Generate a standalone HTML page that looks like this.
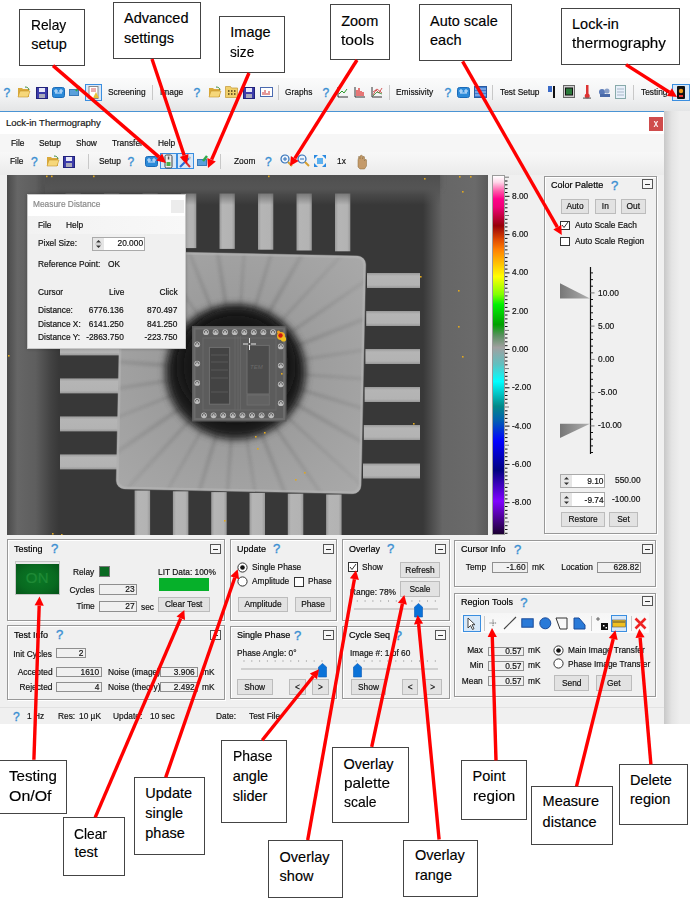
<!DOCTYPE html><html><head><meta charset="utf-8"><style>
*{margin:0;padding:0;box-sizing:border-box}
html,body{width:690px;height:900px;overflow:hidden;background:#fff;font-family:"Liberation Sans",sans-serif;color:#1a1a1a;position:relative}
.a{position:absolute}
.t{position:absolute;white-space:nowrap;-webkit-text-stroke:.2px currentColor}
.co{position:absolute;border:1.4px solid #444;background:#fff}
.grp{position:absolute;border:1px solid #989898;box-shadow:inset 1px 1px 0 #fff,1px 1px 0 #fff}
.min{position:absolute;width:11px;height:10px;border:1px solid #555;background:#f6f6f6}
.min:after{content:"";position:absolute;left:2px;right:2px;top:3.5px;height:1px;background:#333}
.q{position:absolute;font-size:13px;line-height:14px;color:#3a8fd2;-webkit-text-stroke:.35px #3a8fd2}
.tb{position:absolute;border:1px solid #8f8f8f;background:#f0f0f0}
.btn{position:absolute;border:1px solid #bcbcbc;background:#e2e2e2}
svg{position:absolute;overflow:visible}
</style></head><body>
<div class="a" style="left:0px;top:78px;width:690px;height:33px;background:linear-gradient(#fbfbfb,#f3f4f5 50%,#e4e5e6)"></div>
<div class="a" style="left:0px;top:111px;width:664px;height:1px;background:#4a94d4"></div>
<div class="a" style="left:664px;top:111px;width:26px;height:613px;background:linear-gradient(90deg,#c8c8c8,#e4e4e4 30%,#eeeeee 60%)"></div>
<div class="a" style="left:0px;top:112px;width:664px;height:612px;background:#f0f0f0"></div>
<div class="a" style="left:0px;top:112px;width:664px;height:22px;background:#fff"></div>
<div class="t" style="top:116.0px;font-size:9.5px;line-height:13px;color:#1a1a1a;left:6.0px;transform-origin:left;">Lock-in Thermography</div>
<div class="a" style="left:649px;top:117px;width:14px;height:14px;background:#cf4c4c"></div>
<div class="t" style="top:116.7px;font-size:10px;line-height:13px;color:#fff;left:649.0px;width:14px;text-align:center;transform-origin:center;transform:scaleX(0.88);">x</div>
<div class="a" style="left:0px;top:134px;width:664px;height:18px;background:#f6f6f6"></div>
<div class="t" style="top:136.0px;font-size:9.5px;line-height:13px;color:#111;left:11.0px;transform-origin:left;transform:scaleX(0.88);">File</div>
<div class="t" style="top:136.0px;font-size:9.5px;line-height:13px;color:#111;left:38.5px;transform-origin:left;transform:scaleX(0.88);">Setup</div>
<div class="t" style="top:136.0px;font-size:9.5px;line-height:13px;color:#111;left:75.5px;transform-origin:left;transform:scaleX(0.88);">Show</div>
<div class="t" style="top:136.0px;font-size:9.5px;line-height:13px;color:#111;left:111.5px;transform-origin:left;transform:scaleX(0.88);">Transfer</div>
<div class="t" style="top:136.0px;font-size:9.5px;line-height:13px;color:#111;left:157.5px;transform-origin:left;transform:scaleX(0.88);">Help</div>
<div class="a" style="left:0px;top:152px;width:664px;height:23px;background:linear-gradient(#f8f8f8,#ebebeb)"></div>
<div class="q" style="left:3.5px;top:85.5px;font-size:12px">?</div>
<svg style="left:17px;top:86px" width="14" height="12" viewBox="0 0 14 12"><path d="M1 2h4l1 1h6v8H1z" fill="#d9a93a"/><path d="M3 5h10l-2 6H1z" fill="#f6d77a" stroke="#c8962e" stroke-width=".6"/><path d="M8 1c2 0 4 1 4 3" stroke="#3a8a3a" fill="none" stroke-width="1"/></svg>
<svg style="left:35.5px;top:86.5px" width="12" height="12" viewBox="0 0 12 12"><rect x=".5" y=".5" width="11" height="11" fill="#3c3caa" stroke="#22227a"/><rect x="3" y="1" width="6" height="4" fill="#e8e8f8"/><rect x="3" y="7" width="6" height="4" fill="#aab"/></svg>
<svg style="left:52px;top:87px" width="13" height="11" viewBox="0 0 13 11"><rect x=".5" y=".5" width="12" height="10" rx="2" fill="#2c8ad8" stroke="#1a6ab8"/><path d="M3 3h2v2H3zM8 3h2v2H8zM3 6h7" stroke="#cfe6ff" fill="none" stroke-width="1"/></svg>
<svg style="left:69px;top:86px" width="12" height="11" viewBox="0 0 12 11"><rect x=".5" y="3.5" width="9" height="6" fill="#5aa0dc" stroke="#3a7ab8"/><path d="M7 5l3-4 2 2" stroke="#2fa84a" stroke-width="2" fill="none"/></svg>
<div class="a" style="left:85px;top:84px;width:16.5px;height:16.5px;border:1px solid #3a8ee0;background:#d8e8f8"></div>
<svg style="left:88px;top:86px" width="12" height="13" viewBox="0 0 12 13"><rect x="1" y=".5" width="9" height="12" fill="#fff" stroke="#888"/><path d="M3 3h5M3 5h5" stroke="#c33" stroke-width=".8"/><path d="M5 12l3-6 3 6z" fill="#e8c23a"/></svg>
<div class="t" style="top:85.0px;font-size:9.5px;line-height:13px;color:#111;left:107.8px;transform-origin:left;transform:scaleX(0.88);">Screening</div>
<div class="a" style="left:152px;top:85px;width:1px;height:15px;background:#c8c8c8"></div>
<div class="t" style="top:85.0px;font-size:9.5px;line-height:13px;color:#111;left:160.3px;transform-origin:left;transform:scaleX(0.88);">Image</div>
<div class="q" style="left:193.5px;top:85.5px;font-size:12px">?</div>
<svg style="left:208px;top:86px" width="14" height="12" viewBox="0 0 14 12"><path d="M1 2h4l1 1h6v8H1z" fill="#d9a93a"/><path d="M3 5h10l-2 6H1z" fill="#f6d77a" stroke="#c8962e" stroke-width=".6"/><path d="M8 1c2 0 4 1 4 3" stroke="#3a8a3a" fill="none" stroke-width="1"/></svg>
<svg style="left:225px;top:85px" width="13" height="13" viewBox="0 0 13 13"><path d="M.5 1.5h5l1 1.5h6v9.5H.5z" fill="#f0cf6a" stroke="#c8a040" stroke-width=".8"/><path d="M3 6h1.5M6 6h1.5M9 6h1.5M3 9h1.5M6 9h1.5M9 9h1.5" stroke="#4a3a10" stroke-width="1.6"/></svg>
<svg style="left:242.5px;top:86.5px" width="12" height="12" viewBox="0 0 12 12"><rect x=".5" y=".5" width="11" height="11" fill="#3c3caa" stroke="#22227a"/><rect x="3" y="1" width="6" height="4" fill="#e8e8f8"/><rect x="3" y="7" width="6" height="4" fill="#aab"/></svg>
<svg style="left:260px;top:87px" width="13" height="10" viewBox="0 0 13 10"><rect x=".5" y=".5" width="12" height="9" fill="#fff" stroke="#4a6ab0"/><path d="M3 8V5M5 8V3M7 8V6M9 8V4" stroke="#c33" stroke-width="1"/></svg>
<div class="a" style="left:277.5px;top:85px;width:1.0px;height:15px;background:#c8c8c8"></div>
<div class="t" style="top:85.0px;font-size:9.5px;line-height:13px;color:#111;left:285.4px;transform-origin:left;transform:scaleX(0.88);">Graphs</div>
<div class="q" style="left:322.5px;top:85.5px;font-size:12px">?</div>
<svg style="left:337px;top:86px" width="11" height="12" viewBox="0 0 11 12"><path d="M1 1v10h10" stroke="#333" fill="none"/><path d="M2 8l3-3 2 2 3-4" stroke="#2a9a2a" fill="none"/></svg>
<svg style="left:354px;top:86px" width="11" height="12" viewBox="0 0 11 12"><path d="M1 1v10h10" stroke="#333" fill="none"/><path d="M3 10V4M5 10V2M7 10V5M9 10V6" stroke="#d22" stroke-width="1.2"/></svg>
<svg style="left:371px;top:86px" width="12" height="12" viewBox="0 0 12 12"><path d="M1 1v10h10" stroke="#333" fill="none"/><path d="M2 9l3-5 3 3 3-5M2 6l4-3 5 4" stroke="#c33" fill="none" stroke-width=".8"/><path d="M2 10l4-4 5 2" stroke="#2a8a2a" fill="none" stroke-width=".8"/></svg>
<div class="a" style="left:388.5px;top:85px;width:1.0px;height:15px;background:#c8c8c8"></div>
<div class="t" style="top:85.0px;font-size:9.5px;line-height:13px;color:#111;left:395.7px;transform-origin:left;transform:scaleX(0.88);">Emissivity</div>
<div class="q" style="left:444.5px;top:85.5px;font-size:12px">?</div>
<svg style="left:457px;top:87px" width="13" height="11" viewBox="0 0 13 11"><rect x=".5" y=".5" width="12" height="10" rx="2" fill="#2c8ad8" stroke="#1a6ab8"/><path d="M3 3h2v2H3zM8 3h2v2H8zM3 6h7" stroke="#cfe6ff" fill="none" stroke-width="1"/></svg>
<svg style="left:474px;top:86px" width="13" height="12" viewBox="0 0 13 12"><rect x=".5" y=".5" width="12" height="11" fill="#3a7ad0" stroke="#2a5aa0"/><path d="M1 3h11M1 6h11M1 9h11" stroke="#cfe0ff" stroke-width=".8"/></svg>
<div class="a" style="left:492.4px;top:85px;width:1.0px;height:15px;background:#c8c8c8"></div>
<div class="t" style="top:85.0px;font-size:9.5px;line-height:13px;color:#111;left:500.4px;transform-origin:left;transform:scaleX(0.88);">Test Setup</div>
<svg style="left:547px;top:85px" width="10" height="14" viewBox="0 0 10 14"><rect x="1" y="1" width="4" height="6" fill="#3a6ac8"/><rect x="6" y="1" width="2" height="12" fill="#111"/></svg>
<svg style="left:563px;top:85px" width="12" height="13" viewBox="0 0 12 13"><rect x=".5" y=".5" width="11" height="12" fill="#cfcfcf" stroke="#666"/><rect x="2.5" y="3" width="7" height="7" fill="#2a7a3a" stroke="#111"/></svg>
<svg style="left:582px;top:84px" width="10" height="15" viewBox="0 0 10 15"><rect x="4" y="1" width="2.5" height="10" fill="#d33"/><circle cx="5.2" cy="12" r="2.5" fill="#d33"/><rect x="1" y="13.5" width="8" height="1.2" fill="#666"/></svg>
<svg style="left:598px;top:86px" width="13" height="12" viewBox="0 0 13 12"><circle cx="4" cy="6" r="3" fill="#5a7ab8"/><circle cx="9" cy="5" r="2.5" fill="#8aa0c8"/><rect x="2" y="8" width="10" height="3" fill="#4a6aa8"/></svg>
<svg style="left:615px;top:85px" width="11" height="14" viewBox="0 0 11 14"><rect x=".5" y=".5" width="10" height="13" fill="#e8f0fa" stroke="#8aa"/><path d="M2 4h7M2 7h7M2 10h7" stroke="#9ab" stroke-width=".8"/></svg>
<div class="a" style="left:632.6px;top:85px;width:1.0px;height:15px;background:#c8c8c8"></div>
<div class="t" style="top:85.0px;font-size:9.5px;line-height:13px;color:#111;left:640.6px;transform-origin:left;transform:scaleX(0.88);">Testing</div>
<div class="a" style="left:672px;top:84px;width:17.5px;height:17px;border:1px solid #3a8ee0;background:#d8e8f8"></div>
<svg style="left:675px;top:85px" width="12" height="15" viewBox="0 0 12 15"><rect x="2" y="1" width="8" height="13" rx="1" fill="#111"/><circle cx="6" cy="6" r="2.2" fill="#f39a1a"/><rect x="4" y="10" width="4" height="2" fill="#e33"/></svg>
<div class="t" style="top:153.7px;font-size:9.5px;line-height:13px;color:#111;left:10.0px;transform-origin:left;transform:scaleX(0.88);">File</div>
<div class="q" style="left:31.0px;top:154.5px;font-size:12px">?</div>
<svg style="left:45.5px;top:155px" width="14" height="12" viewBox="0 0 14 12"><path d="M1 2h4l1 1h6v8H1z" fill="#d9a93a"/><path d="M3 5h10l-2 6H1z" fill="#f6d77a" stroke="#c8962e" stroke-width=".6"/><path d="M8 1c2 0 4 1 4 3" stroke="#3a8a3a" fill="none" stroke-width="1"/></svg>
<svg style="left:63px;top:155.5px" width="12" height="12" viewBox="0 0 12 12"><rect x=".5" y=".5" width="11" height="11" fill="#3c3caa" stroke="#22227a"/><rect x="3" y="1" width="6" height="4" fill="#e8e8f8"/><rect x="3" y="7" width="6" height="4" fill="#aab"/></svg>
<div class="a" style="left:88.3px;top:154px;width:1.0px;height:15px;background:#c8c8c8"></div>
<div class="t" style="top:153.7px;font-size:9.5px;line-height:13px;color:#111;left:99.3px;transform-origin:left;transform:scaleX(0.88);">Setup</div>
<div class="q" style="left:127.5px;top:154.5px;font-size:12px">?</div>
<svg style="left:145px;top:156px" width="13" height="11" viewBox="0 0 13 11"><rect x=".5" y=".5" width="12" height="10" rx="2" fill="#2c8ad8" stroke="#1a6ab8"/><path d="M3 3h2v2H3zM8 3h2v2H8zM3 6h7" stroke="#cfe6ff" fill="none" stroke-width="1"/></svg>
<div class="a" style="left:160px;top:153.3px;width:16.5px;height:16.19999999999999px;border:1px solid #3a8ee0;background:#d8e8f8"></div>
<svg style="left:164px;top:154px" width="9" height="15" viewBox="0 0 9 15"><rect x="1" y="1" width="7" height="13" rx="1.5" fill="#eee" stroke="#444"/><rect x="2.5" y="8" width="4" height="4" fill="#4ab04a"/><rect x="3.8" y="2.5" width="1.5" height="3" fill="#555"/></svg>
<div class="a" style="left:176.5px;top:153.3px;width:17.5px;height:16.19999999999999px;border:1px solid #3a8ee0;background:#d8e8f8"></div>
<svg style="left:178px;top:155px" width="14" height="13" viewBox="0 0 14 13"><path d="M2 12L11 3" stroke="#2a6ad8" stroke-width="2.2"/><path d="M4 3l8 9" stroke="#d33" stroke-width="2"/><path d="M9 1l4 1-1 3" fill="#bbb"/></svg>
<svg style="left:196.5px;top:155px" width="12" height="12" viewBox="0 0 12 12"><rect x=".5" y="4.5" width="9" height="6" fill="#5aa0dc" stroke="#3a7ab8"/><path d="M6 6l4-5" stroke="#2fa84a" stroke-width="2.5"/></svg>
<div class="a" style="left:220px;top:154px;width:1px;height:15px;background:#c8c8c8"></div>
<div class="t" style="top:153.7px;font-size:9.5px;line-height:13px;color:#111;left:234.0px;transform-origin:left;transform:scaleX(0.88);">Zoom</div>
<div class="q" style="left:265.0px;top:154.5px;font-size:12px">?</div>
<svg style="left:280px;top:154px" width="13" height="13" viewBox="0 0 13 13"><circle cx="5" cy="5" r="4" fill="#eef4fb" stroke="#2f6fb8" stroke-width="1.2"/><path d="M3 5h4M5 3v4" stroke="#2f6fb8"/><path d="M8 8l4 4" stroke="#d8a030" stroke-width="2"/></svg>
<svg style="left:296.5px;top:154px" width="13" height="13" viewBox="0 0 13 13"><circle cx="5" cy="5" r="4" fill="#eef4fb" stroke="#2f6fb8" stroke-width="1.2"/><path d="M3 5h4" stroke="#2f6fb8"/><path d="M8 8l4 4" stroke="#d8a030" stroke-width="2"/></svg>
<svg style="left:314px;top:155px" width="12" height="12" viewBox="0 0 12 12"><path d="M0 0h4L0 4zM12 0H8l4 4zM0 12h4L0 8zM12 12H8l4-4z" fill="#2a8ae0"/><rect x="3" y="3" width="6" height="6" fill="#5ab0f0"/></svg>
<div class="t" style="top:153.7px;font-size:9.5px;line-height:13px;color:#111;left:336.5px;transform-origin:left;transform:scaleX(0.88);">1x</div>
<svg style="left:356px;top:154px" width="11" height="14" viewBox="0 0 11 14"><path d="M2 13V6l1-4 1 3V2l1.5-1 1 1v3l1-3 1 1v4l1-2 1 1v6l-2 3H4z" fill="#c49a6a" stroke="#8a6a3a" stroke-width=".5"/></svg>
<svg style="left:7px;top:175px;overflow:hidden" width="481" height="360" viewBox="7 175 481 360"><defs><linearGradient id="lb" x1="0" x2="1"><stop offset="0" stop-color="#4a4a4a"/><stop offset=".2" stop-color="#666"/><stop offset=".55" stop-color="#5e5e5e"/><stop offset=".85" stop-color="#424242"/><stop offset="1" stop-color="#383838"/></linearGradient><linearGradient id="rb" x1="0" x2="1"><stop offset="0" stop-color="#383838"/><stop offset=".3" stop-color="#666"/><stop offset=".8" stop-color="#6a6a6a"/><stop offset="1" stop-color="#5a5a5a"/></linearGradient><radialGradient id="pk" cx=".47" cy=".49" r=".72"><stop offset="0" stop-color="#8a8a8a"/><stop offset=".42" stop-color="#9c9c9c"/><stop offset="1" stop-color="#a9a9a9"/></radialGradient><linearGradient id="pin" x1="0" x2="1"><stop offset="0" stop-color="#9a9a9a"/><stop offset=".2" stop-color="#b5b5b5"/><stop offset=".8" stop-color="#b3b3b3"/><stop offset="1" stop-color="#999"/></linearGradient><linearGradient id="pinh" x1="0" x2="0" y1="0" y2="1"><stop offset="0" stop-color="#9a9a9a"/><stop offset=".2" stop-color="#b5b5b5"/><stop offset=".8" stop-color="#b3b3b3"/><stop offset="1" stop-color="#999"/></linearGradient><filter id="bl" x="-30%" y="-30%" width="160%" height="160%"><feGaussianBlur stdDeviation="6"/></filter><filter id="bl2" x="-10%" y="-10%" width="120%" height="120%"><feGaussianBlur stdDeviation="1.4"/></filter><filter id="bl3" x="-20%" y="-20%" width="140%" height="140%"><feGaussianBlur stdDeviation="3"/></filter></defs><rect x="7" y="175" width="481" height="360" fill="#383838"/><rect x="7" y="175" width="52" height="360" fill="url(#lb)"/><rect x="423" y="175" width="65" height="360" fill="url(#rb)"/><rect x="45" y="165" width="395" height="24" fill="#565656" filter="url(#bl3)"/><filter id="bl1" x="-20%" y="-20%" width="140%" height="140%"><feGaussianBlur stdDeviation=".7"/></filter><g filter="url(#bl1)"><rect x="65.5" y="193.5" width="15.3" height="52.2" fill="url(#pin)"/><rect x="104.0" y="193.5" width="15.3" height="53.0" fill="url(#pin)"/><rect x="142.5" y="193.5" width="15.3" height="53.8" fill="url(#pin)"/><rect x="181.0" y="193.5" width="15.3" height="54.6" fill="url(#pin)"/><rect x="219.5" y="193.5" width="15.3" height="55.4" fill="url(#pin)"/><rect x="258.0" y="193.5" width="15.3" height="56.2" fill="url(#pin)"/><rect x="296.5" y="193.5" width="15.3" height="57.0" fill="url(#pin)"/><rect x="335.0" y="193.5" width="15.3" height="57.8" fill="url(#pin)"/><rect x="134.6" y="490.5" width="15.5" height="45.5" fill="url(#pin)"/><rect x="172.89999999999998" y="491.3" width="15.5" height="44.7" fill="url(#pin)"/><rect x="211.2" y="492.1" width="15.5" height="43.9" fill="url(#pin)"/><rect x="249.5" y="492.9" width="15.5" height="43.1" fill="url(#pin)"/><rect x="287.79999999999995" y="493.7" width="15.5" height="42.3" fill="url(#pin)"/><rect x="326.1" y="494.5" width="15.5" height="41.5" fill="url(#pin)"/><rect x="60" y="264.4" width="61.4" height="15" fill="url(#pinh)"/><rect x="60" y="302.4" width="60.6" height="15" fill="url(#pinh)"/><rect x="60" y="340.4" width="59.8" height="15" fill="url(#pinh)"/><rect x="60" y="378.4" width="59.0" height="15" fill="url(#pinh)"/><rect x="60" y="416.4" width="58.2" height="15" fill="url(#pinh)"/><rect x="60" y="454.4" width="57.4" height="15" fill="url(#pinh)"/><rect x="367.0" y="273" width="53.0" height="15" fill="url(#pinh)"/><rect x="366.2" y="311" width="53.8" height="15" fill="url(#pinh)"/><rect x="365.4" y="349" width="54.6" height="15" fill="url(#pinh)"/><rect x="364.6" y="387" width="55.4" height="15" fill="url(#pinh)"/><rect x="363.8" y="425" width="56.2" height="15" fill="url(#pinh)"/><rect x="363.0" y="463.5" width="57.0" height="15" fill="url(#pinh)"/></g><linearGradient id="tf" x1="0" x2="0" y1="0" y2="1"><stop offset="0" stop-color="#4e4e4e" stop-opacity="1"/><stop offset=".45" stop-color="#555" stop-opacity=".9"/><stop offset="1" stop-color="#555" stop-opacity="0"/></linearGradient><rect x="45" y="175" width="395" height="30" fill="url(#tf)"/><rect x="118.6" y="253.5" width="244.8" height="237.8" rx="8" fill="url(#pk)" transform="rotate(1.2 241 372.4)"/><clipPath id="pkc"><rect x="118.6" y="253.5" width="244.8" height="237.8" rx="8" transform="rotate(1.2 241 372.4)"/></clipPath><radialGradient id="sm"><stop offset=".35" stop-color="#fff" stop-opacity="1"/><stop offset="1" stop-color="#fff" stop-opacity=".25"/></radialGradient><mask id="smk"><circle cx="236" cy="370" r="180" fill="url(#sm)"/></mask><g clip-path="url(#pkc)"><g mask="url(#smk)"><g opacity=".24" filter="url(#bl2)"><line x1="236" y1="370" x2="455.5" y2="385.3" stroke="#505050" stroke-width="2.2"/><line x1="236" y1="370" x2="446.5" y2="433.8" stroke="#505050" stroke-width="3.0"/><line x1="236" y1="370" x2="427.1" y2="479.0" stroke="#505050" stroke-width="3.8000000000000003"/><line x1="236" y1="370" x2="398.0" y2="518.8" stroke="#505050" stroke-width="2.2"/><line x1="236" y1="370" x2="360.8" y2="551.2" stroke="#505050" stroke-width="3.0"/><line x1="236" y1="370" x2="317.4" y2="574.4" stroke="#505050" stroke-width="3.8000000000000003"/><line x1="236" y1="370" x2="269.9" y2="587.4" stroke="#505050" stroke-width="2.2"/><line x1="236" y1="370" x2="220.7" y2="589.5" stroke="#505050" stroke-width="3.0"/><line x1="236" y1="370" x2="172.2" y2="580.5" stroke="#505050" stroke-width="3.8000000000000003"/><line x1="236" y1="370" x2="127.0" y2="561.1" stroke="#505050" stroke-width="2.2"/><line x1="236" y1="370" x2="87.2" y2="532.0" stroke="#505050" stroke-width="3.0"/><line x1="236" y1="370" x2="54.8" y2="494.8" stroke="#505050" stroke-width="3.8000000000000003"/><line x1="236" y1="370" x2="31.6" y2="451.4" stroke="#505050" stroke-width="2.2"/><line x1="236" y1="370" x2="18.6" y2="403.9" stroke="#505050" stroke-width="3.0"/><line x1="236" y1="370" x2="16.5" y2="354.7" stroke="#505050" stroke-width="3.8000000000000003"/><line x1="236" y1="370" x2="25.5" y2="306.2" stroke="#505050" stroke-width="2.2"/><line x1="236" y1="370" x2="44.9" y2="261.0" stroke="#505050" stroke-width="3.0"/><line x1="236" y1="370" x2="74.0" y2="221.2" stroke="#505050" stroke-width="3.8000000000000003"/><line x1="236" y1="370" x2="111.2" y2="188.8" stroke="#505050" stroke-width="2.2"/><line x1="236" y1="370" x2="154.6" y2="165.6" stroke="#505050" stroke-width="3.0"/><line x1="236" y1="370" x2="202.1" y2="152.6" stroke="#505050" stroke-width="3.8000000000000003"/><line x1="236" y1="370" x2="251.3" y2="150.5" stroke="#505050" stroke-width="2.2"/><line x1="236" y1="370" x2="299.8" y2="159.5" stroke="#505050" stroke-width="3.0"/><line x1="236" y1="370" x2="345.0" y2="178.9" stroke="#505050" stroke-width="3.8000000000000003"/><line x1="236" y1="370" x2="384.8" y2="208.0" stroke="#505050" stroke-width="2.2"/><line x1="236" y1="370" x2="417.2" y2="245.2" stroke="#505050" stroke-width="3.0"/><line x1="236" y1="370" x2="440.4" y2="288.6" stroke="#505050" stroke-width="3.8000000000000003"/><line x1="236" y1="370" x2="453.4" y2="336.1" stroke="#505050" stroke-width="2.2"/></g></g></g><rect x="119.6" y="254.5" width="242.8" height="235.8" rx="8" fill="none" stroke="#b8b8b8" stroke-width="2.5" opacity=".55" filter="url(#bl1)" transform="rotate(1.2 241 372.4)"/><ellipse cx="235.5" cy="372" rx="72" ry="69" fill="#3a3a3a" filter="url(#bl3)" opacity=".7"/><ellipse cx="235.5" cy="372" rx="67" ry="64.5" fill="#1c1c1c" filter="url(#bl3)"/><ellipse cx="236" cy="366" rx="56" ry="54" fill="#141414" filter="url(#bl)"/><rect x="192" y="326" width="94.5" height="95.5" fill="#5c5c5c"/><rect x="194.5" y="328.5" width="89.5" height="90.5" fill="none" stroke="#6c6c6c" stroke-width="2"/><rect x="203" y="338" width="73" height="72" fill="none" stroke="#686868" stroke-width="1"/><rect x="209.4" y="347.4" width="20.3" height="56.8" fill="#434343" stroke="#707070" stroke-width="1"/><path d="M211 355h17" stroke="#555" stroke-width="1.2"/><path d="M211 362h17" stroke="#555" stroke-width="1.2"/><path d="M211 370h17" stroke="#555" stroke-width="1.2"/><path d="M211 378h17" stroke="#555" stroke-width="1.2"/><path d="M211 392h17" stroke="#555" stroke-width="1.2"/><path d="M235 336v74M238 336v74M240.5 336v74" stroke="#6a6a6a" stroke-width=".8"/><rect x="247" y="345.4" width="22.3" height="48.6" fill="#4c4c4c" stroke="#6e6e6e" stroke-width="1"/><rect x="247" y="395" width="22.3" height="10" fill="#626262" stroke="#707070" stroke-width=".8"/><text x="250" y="369" font-size="6" fill="#6a6a6a" font-style="italic" font-family="Liberation Sans">TEM</text><circle cx="206.0" cy="332.2" r="2.9" fill="#bcbcbc"/><path d="M204.5 332.7a1.6 1.6 0 1 1 3 0" stroke="#4a4a4a" stroke-width=".9" fill="none"/><circle cx="204.0" cy="415.3" r="2.9" fill="#bcbcbc"/><path d="M202.5 415.8a1.6 1.6 0 1 1 3 0" stroke="#4a4a4a" stroke-width=".9" fill="none"/><circle cx="215.6" cy="332.2" r="2.9" fill="#bcbcbc"/><path d="M214.1 332.7a1.6 1.6 0 1 1 3 0" stroke="#4a4a4a" stroke-width=".9" fill="none"/><circle cx="213.6" cy="415.3" r="2.9" fill="#bcbcbc"/><path d="M212.1 415.8a1.6 1.6 0 1 1 3 0" stroke="#4a4a4a" stroke-width=".9" fill="none"/><circle cx="225.1" cy="332.2" r="2.9" fill="#bcbcbc"/><path d="M223.6 332.7a1.6 1.6 0 1 1 3 0" stroke="#4a4a4a" stroke-width=".9" fill="none"/><circle cx="223.2" cy="415.3" r="2.9" fill="#bcbcbc"/><path d="M221.7 415.8a1.6 1.6 0 1 1 3 0" stroke="#4a4a4a" stroke-width=".9" fill="none"/><circle cx="234.7" cy="332.2" r="2.9" fill="#bcbcbc"/><path d="M233.2 332.7a1.6 1.6 0 1 1 3 0" stroke="#4a4a4a" stroke-width=".9" fill="none"/><circle cx="232.8" cy="415.3" r="2.9" fill="#bcbcbc"/><path d="M231.3 415.8a1.6 1.6 0 1 1 3 0" stroke="#4a4a4a" stroke-width=".9" fill="none"/><circle cx="244.3" cy="332.2" r="2.9" fill="#bcbcbc"/><path d="M242.8 332.7a1.6 1.6 0 1 1 3 0" stroke="#4a4a4a" stroke-width=".9" fill="none"/><circle cx="242.4" cy="415.3" r="2.9" fill="#bcbcbc"/><path d="M240.9 415.8a1.6 1.6 0 1 1 3 0" stroke="#4a4a4a" stroke-width=".9" fill="none"/><circle cx="253.8" cy="332.2" r="2.9" fill="#bcbcbc"/><path d="M252.3 332.7a1.6 1.6 0 1 1 3 0" stroke="#4a4a4a" stroke-width=".9" fill="none"/><circle cx="252.0" cy="415.3" r="2.9" fill="#bcbcbc"/><path d="M250.5 415.8a1.6 1.6 0 1 1 3 0" stroke="#4a4a4a" stroke-width=".9" fill="none"/><circle cx="263.4" cy="332.2" r="2.9" fill="#bcbcbc"/><path d="M261.9 332.7a1.6 1.6 0 1 1 3 0" stroke="#4a4a4a" stroke-width=".9" fill="none"/><circle cx="261.6" cy="415.3" r="2.9" fill="#bcbcbc"/><path d="M260.1 415.8a1.6 1.6 0 1 1 3 0" stroke="#4a4a4a" stroke-width=".9" fill="none"/><circle cx="273.0" cy="332.2" r="2.9" fill="#bcbcbc"/><path d="M271.5 332.7a1.6 1.6 0 1 1 3 0" stroke="#4a4a4a" stroke-width=".9" fill="none"/><circle cx="271.2" cy="415.3" r="2.9" fill="#bcbcbc"/><path d="M269.7 415.8a1.6 1.6 0 1 1 3 0" stroke="#4a4a4a" stroke-width=".9" fill="none"/><circle cx="197.2" cy="344.3" r="2.9" fill="#bcbcbc"/><path d="M195.7 344.8a1.6 1.6 0 1 1 3 0" stroke="#4a4a4a" stroke-width=".9" fill="none"/><circle cx="197.2" cy="363.6" r="2.9" fill="#bcbcbc"/><path d="M195.7 364.1a1.6 1.6 0 1 1 3 0" stroke="#4a4a4a" stroke-width=".9" fill="none"/><circle cx="197.2" cy="382.9" r="2.9" fill="#bcbcbc"/><path d="M195.7 383.4a1.6 1.6 0 1 1 3 0" stroke="#4a4a4a" stroke-width=".9" fill="none"/><circle cx="197.2" cy="401.0" r="2.9" fill="#bcbcbc"/><path d="M195.7 401.5a1.6 1.6 0 1 1 3 0" stroke="#4a4a4a" stroke-width=".9" fill="none"/><circle cx="280.8" cy="346.4" r="2.9" fill="#bcbcbc"/><path d="M279.3 346.9a1.6 1.6 0 1 1 3 0" stroke="#4a4a4a" stroke-width=".9" fill="none"/><circle cx="280.8" cy="365.6" r="2.9" fill="#bcbcbc"/><path d="M279.3 366.1a1.6 1.6 0 1 1 3 0" stroke="#4a4a4a" stroke-width=".9" fill="none"/><circle cx="280.8" cy="384.3" r="2.9" fill="#bcbcbc"/><path d="M279.3 384.8a1.6 1.6 0 1 1 3 0" stroke="#4a4a4a" stroke-width=".9" fill="none"/><circle cx="280.8" cy="403.2" r="2.9" fill="#bcbcbc"/><path d="M279.3 403.7a1.6 1.6 0 1 1 3 0" stroke="#4a4a4a" stroke-width=".9" fill="none"/><path d="M243 344h5M251 344h5M249.5 338v5M249.5 345v5" stroke="#e8e8e8" stroke-width="1"/><circle cx="281" cy="336" r="4" fill="#f0b020"/><circle cx="283.5" cy="339" r="2.6" fill="#f0c020"/><circle cx="278.5" cy="332" r="1.5" fill="#f0a020"/><circle cx="280.5" cy="335.5" r="2.2" fill="#d01a10"/><rect x="46" y="175.6" width="1.6" height="1.6" fill="#e0a820"/><rect x="51" y="175.6" width="1.6" height="1.6" fill="#e0a820"/><rect x="93" y="175.6" width="1.6" height="1.6" fill="#e0a820"/><rect x="268" y="175.6" width="1.6" height="1.6" fill="#e0a820"/><rect x="424" y="178" width="1.6" height="1.6" fill="#e0a820"/><rect x="459" y="176" width="1.6" height="1.6" fill="#e0a820"/><rect x="470" y="176" width="1.6" height="1.6" fill="#e0a820"/><rect x="462" y="191" width="1.6" height="1.6" fill="#e0a820"/><rect x="420" y="276" width="1.6" height="1.6" fill="#e0a820"/><rect x="458" y="290" width="1.6" height="1.6" fill="#e0a820"/><rect x="458" y="326" width="1.6" height="1.6" fill="#e0a820"/><rect x="462" y="356" width="1.6" height="1.6" fill="#e0a820"/><rect x="413" y="423" width="1.6" height="1.6" fill="#e0a820"/><rect x="304" y="472" width="1.6" height="1.6" fill="#e0a820"/><rect x="295" y="479" width="1.6" height="1.6" fill="#e0a820"/><rect x="255" y="436" width="1.6" height="1.6" fill="#e0a820"/><rect x="257" y="448" width="1.6" height="1.6" fill="#e0a820"/><rect x="264" y="432" width="1.6" height="1.6" fill="#e0a820"/><rect x="61" y="534" width="1.6" height="1.6" fill="#e0a820"/><rect x="8" y="355" width="1.6" height="1.6" fill="#e0a820"/><rect x="52" y="533" width="1.6" height="1.6" fill="#e0a820"/><rect x="224" y="520" width="1.6" height="1.6" fill="#e0a820"/><rect x="281" y="373" width="1.6" height="1.6" fill="#e0a820"/></svg>
<div class="a" style="left:27px;top:193.5px;width:159px;height:155px;background:#f0f0f0;border:1px solid #c8c8c8;box-shadow:0 0 3px rgba(0,0,0,.25)"></div>
<div class="a" style="left:28px;top:194.5px;width:157px;height:21.5px;background:#fff"></div>
<div class="t" style="top:197.4px;font-size:9.5px;line-height:13px;color:#8a8a8a;left:33.4px;transform-origin:left;transform:scaleX(0.88);">Measure Distance</div>
<div class="a" style="left:171px;top:199.7px;width:13.300000000000011px;height:13.100000000000023px;background:#ececec"></div>
<div class="a" style="left:28px;top:216px;width:157px;height:18px;background:linear-gradient(90deg,#f2f2f2,#f8f8f8)"></div>
<div class="t" style="top:218.0px;font-size:9.5px;line-height:13px;color:#111;left:38.0px;transform-origin:left;transform:scaleX(0.88);">File</div>
<div class="t" style="top:218.0px;font-size:9.5px;line-height:13px;color:#111;left:66.0px;transform-origin:left;transform:scaleX(0.88);">Help</div>
<div class="t" style="top:235.7px;font-size:9.5px;line-height:13px;color:#111;left:38.0px;transform-origin:left;transform:scaleX(0.88);">Pixel Size:</div>
<div class="a" style="left:92px;top:237px;width:52.6px;height:14px;background:#fff;border:1px solid #aaa"></div>
<div class="a" style="left:93px;top:238px;width:11px;height:12px;background:#e6e6e6"></div>
<svg style="left:94px;top:238px" width="9" height="12" viewBox="0 0 9 12"><path d="M2 4.5L4.5 2 7 4.5z" fill="#333"/><path d="M2 7.5L4.5 10 7 7.5z" fill="#333"/><path d="M1 6h7" stroke="#aaa" stroke-width=".6"/></svg>
<div class="t" style="top:236.2px;font-size:9.5px;line-height:13px;color:#111;right:547.2px;text-align:right;transform-origin:right;transform:scaleX(0.88);">20.000</div>
<div class="t" style="top:257.0px;font-size:9.5px;line-height:13px;color:#111;left:38.0px;transform-origin:left;transform:scaleX(0.88);">Reference Point:</div>
<div class="t" style="top:257.0px;font-size:9.5px;line-height:13px;color:#111;left:108.0px;transform-origin:left;transform:scaleX(0.88);">OK</div>
<div class="t" style="top:285.4px;font-size:9.5px;line-height:13px;color:#111;left:38.0px;transform-origin:left;transform:scaleX(0.88);">Cursor</div>
<div class="t" style="top:285.4px;font-size:9.5px;line-height:13px;color:#111;right:566.0px;text-align:right;transform-origin:right;transform:scaleX(0.88);">Live</div>
<div class="t" style="top:285.4px;font-size:9.5px;line-height:13px;color:#111;right:512.8px;text-align:right;transform-origin:right;transform:scaleX(0.88);">Click</div>
<div class="t" style="top:303.2px;font-size:9.5px;line-height:13px;color:#111;left:38.0px;transform-origin:left;transform:scaleX(0.88);">Distance:</div>
<div class="t" style="top:303.2px;font-size:9.5px;line-height:13px;color:#111;right:566.0px;text-align:right;transform-origin:right;transform:scaleX(0.88);">6776.136</div>
<div class="t" style="top:303.2px;font-size:9.5px;line-height:13px;color:#111;right:512.8px;text-align:right;transform-origin:right;transform:scaleX(0.88);">870.497</div>
<div class="t" style="top:316.7px;font-size:9.5px;line-height:13px;color:#111;left:38.0px;transform-origin:left;transform:scaleX(0.88);">Distance X:</div>
<div class="t" style="top:316.7px;font-size:9.5px;line-height:13px;color:#111;right:566.0px;text-align:right;transform-origin:right;transform:scaleX(0.88);">6141.250</div>
<div class="t" style="top:316.7px;font-size:9.5px;line-height:13px;color:#111;right:512.8px;text-align:right;transform-origin:right;transform:scaleX(0.88);">841.250</div>
<div class="t" style="top:330.2px;font-size:9.5px;line-height:13px;color:#111;left:38.0px;transform-origin:left;transform:scaleX(0.88);">Distance Y:</div>
<div class="t" style="top:330.2px;font-size:9.5px;line-height:13px;color:#111;right:566.0px;text-align:right;transform-origin:right;transform:scaleX(0.88);">-2863.750</div>
<div class="t" style="top:330.2px;font-size:9.5px;line-height:13px;color:#111;right:512.8px;text-align:right;transform-origin:right;transform:scaleX(0.88);">-223.750</div>
<div class="a" style="left:491.5px;top:175px;width:13.5px;height:360px;border:1px solid #9a9a9a;background:linear-gradient(#ffffff 0.0%,#ffd8ea 1.7%,#ff5aaa 4.2%,#ff0088 6.4%,#f00078 8.6%,#960008 13.9%,#e04a00 17.8%,#ff8000 20.6%,#ffff00 28.1%,#80ff00 33.1%,#00f000 35.9%,#00a000 41.5%,#5a9060 44.6%,#a0a0a0 47.9%,#60c0c0 52.6%,#00ffff 57.4%,#008888 64.3%,#0060b0 68.2%,#0000ff 74.1%,#000080 82.2%,#8000ff 90.8%,#1a0030 100.0%)"></div>
<svg style="left:505px;top:175px" width="6" height="360" viewBox="0 0 6 360"><path d="M0 2.2h4" stroke="#777" stroke-width="1"/><path d="M0 6.0h2.5" stroke="#111" stroke-width="1"/><path d="M0 9.8h2.5" stroke="#111" stroke-width="1"/><path d="M0 13.6h2.5" stroke="#111" stroke-width="1"/><path d="M0 17.5h2.5" stroke="#111" stroke-width="1"/><path d="M0 21.3h4.5" stroke="#111" stroke-width="1"/><path d="M0 25.1h2.5" stroke="#111" stroke-width="1"/><path d="M0 29.0h2.5" stroke="#111" stroke-width="1"/><path d="M0 32.8h2.5" stroke="#111" stroke-width="1"/><path d="M0 36.6h2.5" stroke="#111" stroke-width="1"/><path d="M0 40.5h4" stroke="#777" stroke-width="1"/><path d="M0 44.3h2.5" stroke="#111" stroke-width="1"/><path d="M0 48.1h2.5" stroke="#111" stroke-width="1"/><path d="M0 51.9h2.5" stroke="#111" stroke-width="1"/><path d="M0 55.8h2.5" stroke="#111" stroke-width="1"/><path d="M0 59.6h4.5" stroke="#111" stroke-width="1"/><path d="M0 63.4h2.5" stroke="#111" stroke-width="1"/><path d="M0 67.3h2.5" stroke="#111" stroke-width="1"/><path d="M0 71.1h2.5" stroke="#111" stroke-width="1"/><path d="M0 74.9h2.5" stroke="#111" stroke-width="1"/><path d="M0 78.8h4" stroke="#777" stroke-width="1"/><path d="M0 82.6h2.5" stroke="#111" stroke-width="1"/><path d="M0 86.4h2.5" stroke="#111" stroke-width="1"/><path d="M0 90.2h2.5" stroke="#111" stroke-width="1"/><path d="M0 94.1h2.5" stroke="#111" stroke-width="1"/><path d="M0 97.9h4.5" stroke="#111" stroke-width="1"/><path d="M0 101.7h2.5" stroke="#111" stroke-width="1"/><path d="M0 105.6h2.5" stroke="#111" stroke-width="1"/><path d="M0 109.4h2.5" stroke="#111" stroke-width="1"/><path d="M0 113.2h2.5" stroke="#111" stroke-width="1"/><path d="M0 117.1h4" stroke="#777" stroke-width="1"/><path d="M0 120.9h2.5" stroke="#111" stroke-width="1"/><path d="M0 124.7h2.5" stroke="#111" stroke-width="1"/><path d="M0 128.5h2.5" stroke="#111" stroke-width="1"/><path d="M0 132.4h2.5" stroke="#111" stroke-width="1"/><path d="M0 136.2h4.5" stroke="#111" stroke-width="1"/><path d="M0 140.0h2.5" stroke="#111" stroke-width="1"/><path d="M0 143.9h2.5" stroke="#111" stroke-width="1"/><path d="M0 147.7h2.5" stroke="#111" stroke-width="1"/><path d="M0 151.5h2.5" stroke="#111" stroke-width="1"/><path d="M0 155.4h4" stroke="#777" stroke-width="1"/><path d="M0 159.2h2.5" stroke="#111" stroke-width="1"/><path d="M0 163.0h2.5" stroke="#111" stroke-width="1"/><path d="M0 166.8h2.5" stroke="#111" stroke-width="1"/><path d="M0 170.7h2.5" stroke="#111" stroke-width="1"/><path d="M0 174.5h4.5" stroke="#111" stroke-width="1"/><path d="M0 178.3h2.5" stroke="#111" stroke-width="1"/><path d="M0 182.2h2.5" stroke="#111" stroke-width="1"/><path d="M0 186.0h2.5" stroke="#111" stroke-width="1"/><path d="M0 189.8h2.5" stroke="#111" stroke-width="1"/><path d="M0 193.6h4" stroke="#777" stroke-width="1"/><path d="M0 197.5h2.5" stroke="#111" stroke-width="1"/><path d="M0 201.3h2.5" stroke="#111" stroke-width="1"/><path d="M0 205.1h2.5" stroke="#111" stroke-width="1"/><path d="M0 209.0h2.5" stroke="#111" stroke-width="1"/><path d="M0 212.8h4.5" stroke="#111" stroke-width="1"/><path d="M0 216.6h2.5" stroke="#111" stroke-width="1"/><path d="M0 220.5h2.5" stroke="#111" stroke-width="1"/><path d="M0 224.3h2.5" stroke="#111" stroke-width="1"/><path d="M0 228.1h2.5" stroke="#111" stroke-width="1"/><path d="M0 232.0h4" stroke="#777" stroke-width="1"/><path d="M0 235.8h2.5" stroke="#111" stroke-width="1"/><path d="M0 239.6h2.5" stroke="#111" stroke-width="1"/><path d="M0 243.4h2.5" stroke="#111" stroke-width="1"/><path d="M0 247.3h2.5" stroke="#111" stroke-width="1"/><path d="M0 251.1h4.5" stroke="#111" stroke-width="1"/><path d="M0 254.9h2.5" stroke="#111" stroke-width="1"/><path d="M0 258.8h2.5" stroke="#111" stroke-width="1"/><path d="M0 262.6h2.5" stroke="#111" stroke-width="1"/><path d="M0 266.4h2.5" stroke="#111" stroke-width="1"/><path d="M0 270.2h4" stroke="#777" stroke-width="1"/><path d="M0 274.1h2.5" stroke="#111" stroke-width="1"/><path d="M0 277.9h2.5" stroke="#111" stroke-width="1"/><path d="M0 281.7h2.5" stroke="#111" stroke-width="1"/><path d="M0 285.6h2.5" stroke="#111" stroke-width="1"/><path d="M0 289.4h4.5" stroke="#111" stroke-width="1"/><path d="M0 293.2h2.5" stroke="#111" stroke-width="1"/><path d="M0 297.1h2.5" stroke="#111" stroke-width="1"/><path d="M0 300.9h2.5" stroke="#111" stroke-width="1"/><path d="M0 304.7h2.5" stroke="#111" stroke-width="1"/><path d="M0 308.6h4" stroke="#777" stroke-width="1"/><path d="M0 312.4h2.5" stroke="#111" stroke-width="1"/><path d="M0 316.2h2.5" stroke="#111" stroke-width="1"/><path d="M0 320.0h2.5" stroke="#111" stroke-width="1"/><path d="M0 323.9h2.5" stroke="#111" stroke-width="1"/><path d="M0 327.7h4.5" stroke="#111" stroke-width="1"/><path d="M0 331.5h2.5" stroke="#111" stroke-width="1"/><path d="M0 335.4h2.5" stroke="#111" stroke-width="1"/><path d="M0 339.2h2.5" stroke="#111" stroke-width="1"/><path d="M0 343.0h2.5" stroke="#111" stroke-width="1"/><path d="M0 346.9h4" stroke="#777" stroke-width="1"/><path d="M0 350.7h2.5" stroke="#111" stroke-width="1"/><path d="M0 354.5h2.5" stroke="#111" stroke-width="1"/><path d="M0 358.3h2.5" stroke="#111" stroke-width="1"/></svg>
<div class="t" style="top:188.7px;font-size:9.5px;line-height:13px;color:#111;left:512.3px;transform-origin:left;transform:scaleX(0.88);">8.00</div>
<div class="t" style="top:227.0px;font-size:9.5px;line-height:13px;color:#111;left:512.3px;transform-origin:left;transform:scaleX(0.88);">6.00</div>
<div class="t" style="top:265.3px;font-size:9.5px;line-height:13px;color:#111;left:512.3px;transform-origin:left;transform:scaleX(0.88);">4.00</div>
<div class="t" style="top:303.6px;font-size:9.5px;line-height:13px;color:#111;left:512.3px;transform-origin:left;transform:scaleX(0.88);">2.00</div>
<div class="t" style="top:341.9px;font-size:9.5px;line-height:13px;color:#111;left:512.3px;transform-origin:left;transform:scaleX(0.88);">0.00</div>
<div class="t" style="top:380.2px;font-size:9.5px;line-height:13px;color:#111;left:512.3px;transform-origin:left;transform:scaleX(0.88);">-2.00</div>
<div class="t" style="top:418.5px;font-size:9.5px;line-height:13px;color:#111;left:512.3px;transform-origin:left;transform:scaleX(0.88);">-4.00</div>
<div class="t" style="top:456.8px;font-size:9.5px;line-height:13px;color:#111;left:512.3px;transform-origin:left;transform:scaleX(0.88);">-6.00</div>
<div class="t" style="top:495.1px;font-size:9.5px;line-height:13px;color:#111;left:512.3px;transform-origin:left;transform:scaleX(0.88);">-8.00</div>
<div class="grp" style="left:544px;top:175.6px;width:112.79999999999995px;height:358.6px"></div>
<div class="t" style="top:178.3px;font-size:9.5px;line-height:13px;color:#000;left:551.0px;transform-origin:left;transform:scaleX(0.95);">Color Palette</div>
<div class="q" style="left:611px;top:178.6px">?</div>
<div class="min" style="left:641.7px;top:179.4px"></div>
<div class="btn" style="left:561px;top:199.2px;width:28px;height:15.100000000000023px"></div>
<div class="t" style="top:199.4px;font-size:9.5px;line-height:13px;color:#111;left:561.0px;width:28px;text-align:center;transform-origin:center;transform:scaleX(0.88);">Auto</div>
<div class="btn" style="left:595px;top:199.2px;width:20.700000000000045px;height:15.100000000000023px"></div>
<div class="t" style="top:199.4px;font-size:9.5px;line-height:13px;color:#111;left:595.0px;width:20.700000000000045px;text-align:center;transform-origin:center;transform:scaleX(0.88);">In</div>
<div class="btn" style="left:621px;top:199.2px;width:24.5px;height:15.100000000000023px"></div>
<div class="t" style="top:199.4px;font-size:9.5px;line-height:13px;color:#111;left:621.0px;width:24.5px;text-align:center;transform-origin:center;transform:scaleX(0.88);">Out</div>
<div class="a" style="left:560.3px;top:220.5px;width:9.5px;height:9.5px;border:1px solid #333;background:#fff"></div>
<svg style="left:561px;top:221px" width="8" height="8" viewBox="0 0 8 8"><path d="M1 4l2 2.5L7 1" stroke="#333" fill="none" stroke-width="1"/></svg>
<div class="t" style="top:217.9px;font-size:9.5px;line-height:13px;color:#111;left:574.5px;transform-origin:left;transform:scaleX(0.88);">Auto Scale Each</div>
<div class="a" style="left:560.3px;top:236.9px;width:9.5px;height:9.5px;border:1px solid #333;background:#fff"></div>
<div class="t" style="top:234.3px;font-size:9.5px;line-height:13px;color:#111;left:574.5px;transform-origin:left;transform:scaleX(0.88);">Auto Scale Region</div>
<svg style="left:0;top:0" width="690" height="900" viewBox="0 0 690 900"><path d="M590.5 267V454" stroke="#111" stroke-width="1.2"/><path d="M590.5 272.9h2.5" stroke="#111" stroke-width="1"/><path d="M590.5 279.6h2.5" stroke="#111" stroke-width="1"/><path d="M590.5 286.2h2.5" stroke="#111" stroke-width="1"/><path d="M590.5 292.9h4" stroke="#777" stroke-width="1"/><path d="M590.5 299.5h2.5" stroke="#111" stroke-width="1"/><path d="M590.5 306.2h2.5" stroke="#111" stroke-width="1"/><path d="M590.5 312.8h2.5" stroke="#111" stroke-width="1"/><path d="M590.5 319.5h2.5" stroke="#111" stroke-width="1"/><path d="M590.5 326.1h4" stroke="#777" stroke-width="1"/><path d="M590.5 332.8h2.5" stroke="#111" stroke-width="1"/><path d="M590.5 339.4h2.5" stroke="#111" stroke-width="1"/><path d="M590.5 346.1h2.5" stroke="#111" stroke-width="1"/><path d="M590.5 352.8h2.5" stroke="#111" stroke-width="1"/><path d="M590.5 359.4h4" stroke="#777" stroke-width="1"/><path d="M590.5 366.0h2.5" stroke="#111" stroke-width="1"/><path d="M590.5 372.7h2.5" stroke="#111" stroke-width="1"/><path d="M590.5 379.3h2.5" stroke="#111" stroke-width="1"/><path d="M590.5 386.0h2.5" stroke="#111" stroke-width="1"/><path d="M590.5 392.6h4" stroke="#777" stroke-width="1"/><path d="M590.5 399.3h2.5" stroke="#111" stroke-width="1"/><path d="M590.5 405.9h2.5" stroke="#111" stroke-width="1"/><path d="M590.5 412.6h2.5" stroke="#111" stroke-width="1"/><path d="M590.5 419.2h2.5" stroke="#111" stroke-width="1"/><path d="M590.5 425.9h4" stroke="#777" stroke-width="1"/><path d="M590.5 432.5h2.5" stroke="#111" stroke-width="1"/><path d="M590.5 439.2h2.5" stroke="#111" stroke-width="1"/><path d="M590.5 445.9h2.5" stroke="#111" stroke-width="1"/><path d="M590.5 452.5h2.5" stroke="#111" stroke-width="1"/><defs><linearGradient id="tg" x1="0" x2="1"><stop offset="0" stop-color="#777"/><stop offset="1" stop-color="#b0b0b0"/></linearGradient></defs><polygon points="560,283.2 590,298.5 560,298.5" fill="url(#tg)"/><polygon points="560,423.7 590,423.7 560,438" fill="url(#tg)"/></svg>
<div class="t" style="top:285.7px;font-size:9.5px;line-height:13px;color:#111;left:598.0px;transform-origin:left;transform:scaleX(0.88);">10.00</div>
<div class="t" style="top:318.7px;font-size:9.5px;line-height:13px;color:#111;left:598.0px;transform-origin:left;transform:scaleX(0.88);">5.00</div>
<div class="t" style="top:351.8px;font-size:9.5px;line-height:13px;color:#111;left:598.0px;transform-origin:left;transform:scaleX(0.88);">0.00</div>
<div class="t" style="top:384.8px;font-size:9.5px;line-height:13px;color:#111;left:598.0px;transform-origin:left;transform:scaleX(0.88);">-5.00</div>
<div class="t" style="top:417.9px;font-size:9.5px;line-height:13px;color:#111;left:598.0px;transform-origin:left;transform:scaleX(0.88);">-10.00</div>
<div class="a" style="left:560px;top:473.9px;width:44.8px;height:14.600000000000023px;background:#fff;border:1px solid #aaa"></div>
<div class="a" style="left:561px;top:474.9px;width:11px;height:12.600000000000023px;background:#e6e6e6"></div>
<svg style="left:562px;top:475.4px" width="9" height="12" viewBox="0 0 9 12"><path d="M2 4.5L4.5 2 7 4.5z" fill="#333"/><path d="M2 7.5L4.5 10 7 7.5z" fill="#333"/></svg>
<div class="t" style="top:473.9px;font-size:9.5px;line-height:13px;color:#111;right:86.8px;text-align:right;transform-origin:right;transform:scaleX(0.88);">9.10</div>
<div class="t" style="top:472.9px;font-size:9.5px;line-height:13px;color:#111;left:614.8px;transform-origin:left;transform:scaleX(0.88);">550.00</div>
<div class="a" style="left:560px;top:492.2px;width:44.8px;height:15.199999999999989px;background:#fff;border:1px solid #aaa"></div>
<div class="a" style="left:561px;top:493.2px;width:11px;height:13.199999999999989px;background:#e6e6e6"></div>
<svg style="left:562px;top:493.7px" width="9" height="12" viewBox="0 0 9 12"><path d="M2 4.5L4.5 2 7 4.5z" fill="#333"/><path d="M2 7.5L4.5 10 7 7.5z" fill="#333"/></svg>
<div class="t" style="top:492.5px;font-size:9.5px;line-height:13px;color:#111;right:86.8px;text-align:right;transform-origin:right;transform:scaleX(0.88);">-9.74</div>
<div class="t" style="top:491.5px;font-size:9.5px;line-height:13px;color:#111;left:612.4px;transform-origin:left;transform:scaleX(0.88);">-100.00</div>
<div class="btn" style="left:560.6px;top:512px;width:44.19999999999993px;height:15.200000000000045px"></div>
<div class="t" style="top:512.3px;font-size:9.5px;line-height:13px;color:#111;left:560.6px;width:44.19999999999993px;text-align:center;transform-origin:center;transform:scaleX(0.88);">Restore</div>
<div class="btn" style="left:609.3px;top:512px;width:28.90000000000009px;height:15.200000000000045px"></div>
<div class="t" style="top:512.3px;font-size:9.5px;line-height:13px;color:#111;left:609.3px;width:28.90000000000009px;text-align:center;transform-origin:center;transform:scaleX(0.88);">Set</div>
<div class="grp" style="left:7.3px;top:539.3px;width:217.7px;height:81.40000000000009px"></div>
<div class="t" style="top:542.0px;font-size:9.5px;line-height:13px;color:#000;left:14.3px;transform-origin:left;transform:scaleX(0.95);">Testing</div>
<div class="q" style="left:51px;top:542.3px">?</div>
<div class="min" style="left:210px;top:544px"></div>
<div class="a" style="left:14.6px;top:561.4px;width:45.7px;height:33.6px;background:#e8e8e8;border:1px solid #c6c6c6"></div>
<div class="a" style="left:16.3px;top:563.5px;width:42.3px;height:30.3px;background:radial-gradient(ellipse at 50% 50%,#0b7a26,#086a20 60%,#055419)"></div>
<div class="t" style="top:567.8px;font-size:15px;line-height:20px;color:#1f8a36;left:17.4px;width:40px;text-align:center;transform-origin:center;letter-spacing:.5px">ON</div>
<div class="t" style="top:564.6px;font-size:9.5px;line-height:13px;color:#111;right:595.4px;text-align:right;transform-origin:right;transform:scaleX(0.88);">Relay</div>
<div class="a" style="left:98.9px;top:566px;width:11.3px;height:10.7px;background:#0a6a22;border:1px solid #777"></div>
<div class="t" style="top:582.5px;font-size:9.5px;line-height:13px;color:#111;right:595.4px;text-align:right;transform-origin:right;transform:scaleX(0.88);">Cycles</div>
<div class="tb" style="left:98.9px;top:584.2px;width:37.79999999999998px;height:10.799999999999955px"></div>
<div class="t" style="top:582.3px;font-size:9.5px;line-height:13px;color:#111;right:555.8px;text-align:right;transform-origin:right;transform:scaleX(0.88);">23</div>
<div class="t" style="top:599.4px;font-size:9.5px;line-height:13px;color:#111;right:595.4px;text-align:right;transform-origin:right;transform:scaleX(0.88);">Time</div>
<div class="tb" style="left:98.9px;top:601px;width:37.79999999999998px;height:11px"></div>
<div class="t" style="top:599.2px;font-size:9.5px;line-height:13px;color:#111;right:555.8px;text-align:right;transform-origin:right;transform:scaleX(0.88);">27</div>
<div class="t" style="top:599.9px;font-size:9.5px;line-height:13px;color:#111;left:140.7px;transform-origin:left;transform:scaleX(0.88);">sec</div>
<div class="t" style="top:565.0px;font-size:9.5px;line-height:13px;color:#111;left:158.3px;transform-origin:left;transform:scaleX(0.88);">LIT Data: 100%</div>
<div class="a" style="left:158.7px;top:577.7px;width:50.30000000000001px;height:13.299999999999955px;background:#06b02a"></div>
<div class="btn" style="left:158.3px;top:597.3px;width:51.39999999999998px;height:14.700000000000045px"></div>
<div class="t" style="top:597.3px;font-size:9.5px;line-height:13px;color:#111;left:158.3px;width:51.39999999999998px;text-align:center;transform-origin:center;transform:scaleX(0.88);">Clear Test</div>
<div class="grp" style="left:7.3px;top:625px;width:217.7px;height:75px"></div>
<div class="t" style="top:627.7px;font-size:9.5px;line-height:13px;color:#000;left:14.3px;transform-origin:left;transform:scaleX(0.95);">Test Info</div>
<div class="q" style="left:56px;top:628px">?</div>
<div class="min" style="left:210px;top:630px"></div>
<div class="t" style="top:646.7px;font-size:9.5px;line-height:13px;color:#111;right:637.7px;text-align:right;transform-origin:right;transform:scaleX(0.88);">Init Cycles</div>
<div class="tb" style="left:56px;top:648.3px;width:30px;height:10.0px"></div>
<div class="t" style="top:646.0px;font-size:9.5px;line-height:13px;color:#111;right:606.5px;text-align:right;transform-origin:right;transform:scaleX(0.88);">2</div>
<div class="t" style="top:665.4px;font-size:9.5px;line-height:13px;color:#111;right:637.7px;text-align:right;transform-origin:right;transform:scaleX(0.88);">Accepted</div>
<div class="tb" style="left:56px;top:667.3px;width:45.7px;height:10.0px"></div>
<div class="t" style="top:665.0px;font-size:9.5px;line-height:13px;color:#111;right:590.8px;text-align:right;transform-origin:right;transform:scaleX(0.88);">1610</div>
<div class="t" style="top:665.4px;font-size:9.5px;line-height:13px;color:#111;left:107.7px;transform-origin:left;transform:scaleX(0.88);">Noise (image)</div>
<div class="tb" style="left:160px;top:667.3px;width:37.69999999999999px;height:10.0px"></div>
<div class="t" style="top:665.0px;font-size:9.5px;line-height:13px;color:#111;right:494.8px;text-align:right;transform-origin:right;transform:scaleX(0.88);">3.906</div>
<div class="t" style="top:665.4px;font-size:9.5px;line-height:13px;color:#111;left:201.7px;transform-origin:left;transform:scaleX(0.88);">mK</div>
<div class="t" style="top:680.0px;font-size:9.5px;line-height:13px;color:#111;right:637.7px;text-align:right;transform-origin:right;transform:scaleX(0.88);">Rejected</div>
<div class="tb" style="left:56px;top:682.3px;width:45.7px;height:10.0px"></div>
<div class="t" style="top:680.0px;font-size:9.5px;line-height:13px;color:#111;right:590.8px;text-align:right;transform-origin:right;transform:scaleX(0.88);">4</div>
<div class="t" style="top:680.0px;font-size:9.5px;line-height:13px;color:#111;left:107.7px;transform-origin:left;transform:scaleX(0.88);">Noise (theory)</div>
<div class="tb" style="left:160px;top:682.3px;width:37.69999999999999px;height:10.0px"></div>
<div class="t" style="top:680.0px;font-size:9.5px;line-height:13px;color:#111;right:494.8px;text-align:right;transform-origin:right;transform:scaleX(0.88);">2.492</div>
<div class="t" style="top:680.0px;font-size:9.5px;line-height:13px;color:#111;left:201.7px;transform-origin:left;transform:scaleX(0.88);">mK</div>
<div class="grp" style="left:230px;top:539.3px;width:106.69999999999999px;height:81.40000000000009px"></div>
<div class="t" style="top:542.0px;font-size:9.5px;line-height:13px;color:#000;left:237.0px;transform-origin:left;transform:scaleX(0.95);">Update</div>
<div class="q" style="left:273px;top:542.3px">?</div>
<div class="min" style="left:322.7px;top:544px"></div>
<svg style="left:236.8px;top:561.8px" width="11" height="11" viewBox="0 0 11 11"><circle cx="5.5" cy="5.5" r="4.6" fill="#fff" stroke="#333" stroke-width="1"/><circle cx="5.5" cy="5.5" r="2.3" fill="#111"/></svg>
<div class="t" style="top:560.0px;font-size:9.5px;line-height:13px;color:#111;left:251.7px;transform-origin:left;transform:scaleX(0.88);">Single Phase</div>
<svg style="left:236.8px;top:576.2px" width="11" height="11" viewBox="0 0 11 11"><circle cx="5.5" cy="5.5" r="4.6" fill="#fff" stroke="#333" stroke-width="1"/></svg>
<div class="t" style="top:574.4px;font-size:9.5px;line-height:13px;color:#111;left:251.7px;transform-origin:left;transform:scaleX(0.88);">Amplitude</div>
<div class="a" style="left:294.3px;top:577px;width:9.5px;height:9.5px;border:1px solid #333;background:#fff"></div>
<div class="t" style="top:574.4px;font-size:9.5px;line-height:13px;color:#111;left:308.3px;transform-origin:left;transform:scaleX(0.88);">Phase</div>
<div class="btn" style="left:238.3px;top:596.7px;width:50.0px;height:15.299999999999955px"></div>
<div class="t" style="top:597.0px;font-size:9.5px;line-height:13px;color:#111;left:238.3px;width:50.0px;text-align:center;transform-origin:center;transform:scaleX(0.88);">Amplitude</div>
<div class="btn" style="left:295px;top:596.7px;width:36px;height:15.299999999999955px"></div>
<div class="t" style="top:597.0px;font-size:9.5px;line-height:13px;color:#111;left:295.0px;width:36px;text-align:center;transform-origin:center;transform:scaleX(0.88);">Phase</div>
<div class="grp" style="left:342.3px;top:539.3px;width:107.89999999999998px;height:81.40000000000009px"></div>
<div class="t" style="top:542.0px;font-size:9.5px;line-height:13px;color:#000;left:349.3px;transform-origin:left;transform:scaleX(0.95);">Overlay</div>
<div class="q" style="left:387px;top:542.3px">?</div>
<div class="min" style="left:435px;top:544px"></div>
<div class="a" style="left:348.3px;top:562.3px;width:9.5px;height:9.5px;border:1px solid #333;background:#fff"></div>
<svg style="left:349.3px;top:563.3px" width="8" height="8" viewBox="0 0 8 8"><path d="M1 4l2 2.5L7 1" stroke="#333" fill="none" stroke-width="1"/></svg>
<div class="t" style="top:559.7px;font-size:9.5px;line-height:13px;color:#111;left:362.3px;transform-origin:left;transform:scaleX(0.88);">Show</div>
<div class="btn" style="left:400px;top:562.3px;width:40px;height:15.400000000000091px"></div>
<div class="t" style="top:562.7px;font-size:9.5px;line-height:13px;color:#111;left:400.0px;width:40px;text-align:center;transform-origin:center;transform:scaleX(0.88);">Refresh</div>
<div class="btn" style="left:400px;top:581px;width:40px;height:15.700000000000045px"></div>
<div class="t" style="top:581.5px;font-size:9.5px;line-height:13px;color:#111;left:400.0px;width:40px;text-align:center;transform-origin:center;transform:scaleX(0.88);">Scale</div>
<div class="t" style="top:585.0px;font-size:9.5px;line-height:13px;color:#111;left:350.0px;transform-origin:left;transform:scaleX(0.88);">Range: 78%</div>
<svg style="left:0px;top:600px" width="690" height="3" viewBox="0 0 690 3"><path d="M357.3 0v2" stroke="#bbb" stroke-width="1"/><path d="M365.1 0v2" stroke="#bbb" stroke-width="1"/><path d="M372.9 0v2" stroke="#bbb" stroke-width="1"/><path d="M380.7 0v2" stroke="#bbb" stroke-width="1"/><path d="M388.5 0v2" stroke="#bbb" stroke-width="1"/><path d="M396.3 0v2" stroke="#bbb" stroke-width="1"/><path d="M404.1 0v2" stroke="#bbb" stroke-width="1"/><path d="M411.9 0v2" stroke="#bbb" stroke-width="1"/><path d="M419.7 0v2" stroke="#bbb" stroke-width="1"/><path d="M427.5 0v2" stroke="#bbb" stroke-width="1"/><path d="M435.3 0v2" stroke="#bbb" stroke-width="1"/></svg>
<div class="a" style="left:354.3px;top:607.5px;width:84.0px;height:2.5px;background:#e6e6e6;border:1px solid #d0d0d0"></div>
<svg style="left:414.3px;top:602.7px" width="9" height="15.0" viewBox="0 0 9 15.0"><path d="M0.5 4L4.5 .5 8.5 4V14.0H.5z" fill="#0a72d8" stroke="#0a5ab8" stroke-width=".6"/></svg>
<div class="grp" style="left:230px;top:625.7px;width:106.69999999999999px;height:73.59999999999991px"></div>
<div class="t" style="top:628.4px;font-size:9.5px;line-height:13px;color:#000;left:237.0px;transform-origin:left;transform:scaleX(0.95);">Single Phase</div>
<div class="q" style="left:294px;top:628.7px">?</div>
<div class="min" style="left:322.7px;top:630px"></div>
<div class="t" style="top:646.0px;font-size:9.5px;line-height:13px;color:#111;left:236.7px;transform-origin:left;transform:scaleX(0.88);">Phase Angle: 0°</div>
<svg style="left:0px;top:660px" width="690" height="3" viewBox="0 0 690 3"><path d="M244.0 0v2" stroke="#bbb" stroke-width="1"/><path d="M251.8 0v2" stroke="#bbb" stroke-width="1"/><path d="M259.6 0v2" stroke="#bbb" stroke-width="1"/><path d="M267.4 0v2" stroke="#bbb" stroke-width="1"/><path d="M275.2 0v2" stroke="#bbb" stroke-width="1"/><path d="M283.0 0v2" stroke="#bbb" stroke-width="1"/><path d="M290.8 0v2" stroke="#bbb" stroke-width="1"/><path d="M298.6 0v2" stroke="#bbb" stroke-width="1"/><path d="M306.4 0v2" stroke="#bbb" stroke-width="1"/><path d="M314.2 0v2" stroke="#bbb" stroke-width="1"/><path d="M322.0 0v2" stroke="#bbb" stroke-width="1"/></svg>
<div class="a" style="left:241px;top:667.5px;width:84px;height:2.5px;background:#e6e6e6;border:1px solid #d0d0d0"></div>
<svg style="left:317.7px;top:662.7px" width="9" height="15.0" viewBox="0 0 9 15.0"><path d="M0.5 4L4.5 .5 8.5 4V14.0H.5z" fill="#0a72d8" stroke="#0a5ab8" stroke-width=".6"/></svg>
<div class="btn" style="left:237.3px;top:679.3px;width:35.39999999999998px;height:15.700000000000045px"></div>
<div class="t" style="top:679.8px;font-size:9.5px;line-height:13px;color:#111;left:237.3px;width:35.39999999999998px;text-align:center;transform-origin:center;transform:scaleX(0.88);">Show</div>
<div class="btn" style="left:289px;top:679.3px;width:17px;height:15.700000000000045px"></div>
<div class="t" style="top:679.8px;font-size:9.5px;line-height:13px;color:#111;left:289.0px;width:17px;text-align:center;transform-origin:center;transform:scaleX(0.88);">&lt;</div>
<div class="btn" style="left:312.3px;top:679.3px;width:17.0px;height:15.700000000000045px"></div>
<div class="t" style="top:679.8px;font-size:9.5px;line-height:13px;color:#111;left:312.3px;width:17.0px;text-align:center;transform-origin:center;transform:scaleX(0.88);">&gt;</div>
<div class="grp" style="left:342.3px;top:625.7px;width:107.89999999999998px;height:73.59999999999991px"></div>
<div class="t" style="top:628.4px;font-size:9.5px;line-height:13px;color:#000;left:349.3px;transform-origin:left;transform:scaleX(0.95);">Cycle Seq</div>
<div class="q" style="left:394.7px;top:628.7px">?</div>
<div class="min" style="left:435px;top:630px"></div>
<div class="t" style="top:646.0px;font-size:9.5px;line-height:13px;color:#111;left:350.0px;transform-origin:left;transform:scaleX(0.88);">Image #: 1 of 60</div>
<svg style="left:0px;top:660px" width="690" height="3" viewBox="0 0 690 3"><path d="M356.3 0v2" stroke="#bbb" stroke-width="1"/><path d="M364.2 0v2" stroke="#bbb" stroke-width="1"/><path d="M372.1 0v2" stroke="#bbb" stroke-width="1"/><path d="M380.0 0v2" stroke="#bbb" stroke-width="1"/><path d="M387.9 0v2" stroke="#bbb" stroke-width="1"/><path d="M395.8 0v2" stroke="#bbb" stroke-width="1"/><path d="M403.7 0v2" stroke="#bbb" stroke-width="1"/><path d="M411.6 0v2" stroke="#bbb" stroke-width="1"/><path d="M419.5 0v2" stroke="#bbb" stroke-width="1"/><path d="M427.4 0v2" stroke="#bbb" stroke-width="1"/><path d="M435.3 0v2" stroke="#bbb" stroke-width="1"/></svg>
<div class="a" style="left:353.3px;top:667.5px;width:85.0px;height:2.5px;background:#e6e6e6;border:1px solid #d0d0d0"></div>
<svg style="left:353.3px;top:662.7px" width="9" height="15.0" viewBox="0 0 9 15.0"><path d="M0.5 4L4.5 .5 8.5 4V14.0H.5z" fill="#0a72d8" stroke="#0a5ab8" stroke-width=".6"/></svg>
<div class="btn" style="left:351px;top:679.3px;width:35px;height:15.700000000000045px"></div>
<div class="t" style="top:679.8px;font-size:9.5px;line-height:13px;color:#111;left:351.0px;width:35px;text-align:center;transform-origin:center;transform:scaleX(0.88);">Show</div>
<div class="btn" style="left:401.7px;top:679.3px;width:16.600000000000023px;height:15.700000000000045px"></div>
<div class="t" style="top:679.8px;font-size:9.5px;line-height:13px;color:#111;left:401.7px;width:16.600000000000023px;text-align:center;transform-origin:center;transform:scaleX(0.88);">&lt;</div>
<div class="btn" style="left:424.3px;top:679.3px;width:17.399999999999977px;height:15.700000000000045px"></div>
<div class="t" style="top:679.8px;font-size:9.5px;line-height:13px;color:#111;left:424.3px;width:17.399999999999977px;text-align:center;transform-origin:center;transform:scaleX(0.88);">&gt;</div>
<div class="grp" style="left:454.2px;top:539.7px;width:202.09999999999997px;height:47.69999999999993px"></div>
<div class="t" style="top:542.4px;font-size:9.5px;line-height:13px;color:#000;left:461.2px;transform-origin:left;transform:scaleX(0.95);">Cursor Info</div>
<div class="q" style="left:514px;top:542.7px">?</div>
<div class="min" style="left:642.3px;top:544px"></div>
<div class="t" style="top:559.9px;font-size:9.5px;line-height:13px;color:#111;right:203.5px;text-align:right;transform-origin:right;transform:scaleX(0.88);">Temp</div>
<div class="tb" style="left:491.7px;top:562.3px;width:36.599999999999966px;height:10.5px"></div>
<div class="t" style="top:560.2px;font-size:9.5px;line-height:13px;color:#111;right:164.2px;text-align:right;transform-origin:right;transform:scaleX(0.88);">-1.60</div>
<div class="t" style="top:559.9px;font-size:9.5px;line-height:13px;color:#111;left:531.7px;transform-origin:left;transform:scaleX(0.88);">mK</div>
<div class="t" style="top:559.9px;font-size:9.5px;line-height:13px;color:#111;right:97.4px;text-align:right;transform-origin:right;transform:scaleX(0.88);">Location</div>
<div class="tb" style="left:597.1px;top:562.3px;width:44.19999999999993px;height:10.5px"></div>
<div class="t" style="top:560.2px;font-size:9.5px;line-height:13px;color:#111;right:51.2px;text-align:right;transform-origin:right;transform:scaleX(0.88);">628.82</div>
<div class="grp" style="left:454.2px;top:592.6px;width:202.09999999999997px;height:104.69999999999993px"></div>
<div class="t" style="top:595.3px;font-size:9.5px;line-height:13px;color:#000;left:461.2px;transform-origin:left;transform:scaleX(0.95);">Region Tools</div>
<div class="q" style="left:520.3px;top:595.6px">?</div>
<div class="min" style="left:642.3px;top:596px"></div>
<div class="a" style="left:460.7px;top:613.4px;width:188.3px;height:20.100000000000023px;background:linear-gradient(#f6f6f6,#fbfbfb)"></div>
<div class="a" style="left:463.2px;top:615.2px;width:17.400000000000034px;height:16.799999999999955px;border:1px solid #3a8ee0;background:#d8e8f8"></div>
<svg style="left:466px;top:617px" width="12" height="14" viewBox="0 0 12 14"><path d="M2 1v10l2.5-2.5 2 4 1.5-.8-2-4H9z" fill="#fff" stroke="#333" stroke-width=".9"/></svg>
<div class="a" style="left:483.7px;top:616px;width:1.0px;height:15px;background:#c8c8c8"></div>
<svg style="left:488px;top:618px" width="10" height="10" viewBox="0 0 10 10"><path d="M5 1.5v7M1.5 5h7" stroke="#555" stroke-width=".8" stroke-dasharray="1.2 .6"/></svg>
<svg style="left:503px;top:616px" width="14" height="14" viewBox="0 0 14 14"><path d="M1 13L13 1" stroke="#444" stroke-width="1.1"/></svg>
<svg style="left:521px;top:618px" width="13" height="10" viewBox="0 0 13 10"><rect x=".8" y=".8" width="11.4" height="8.4" fill="#2a7ad8" stroke="#1a4a98" stroke-width="1"/></svg>
<svg style="left:539px;top:617px" width="13" height="13" viewBox="0 0 13 13"><circle cx="6.3" cy="6.3" r="5.5" fill="#2a7ad8" stroke="#1a4a98" stroke-width="1"/></svg>
<svg style="left:555px;top:617px" width="14" height="13" viewBox="0 0 14 13"><path d="M1 1h11v11H5" fill="none" stroke="#333" stroke-width="1"/><path d="M1 1l4 11" stroke="#333" stroke-width="1"/></svg>
<svg style="left:573px;top:617px" width="13" height="13" viewBox="0 0 13 13"><path d="M1 1h5l6 7v4H1z" fill="#2a7ad8" stroke="#1a4a98" stroke-width="1"/></svg>
<div class="a" style="left:590.9px;top:616px;width:1.0px;height:15px;background:#c8c8c8"></div>
<svg style="left:595px;top:616px" width="14" height="15" viewBox="0 0 14 15"><path d="M3 1v4M1 3h4" stroke="#444" stroke-width=".8"/><rect x="6" y="7" width="7" height="7" fill="#111"/><rect x="8" y="9" width="1.5" height="1.5" fill="#fff"/><rect x="10.5" y="11" width="1.5" height="1.5" fill="#fff"/></svg>
<div class="a" style="left:610.7px;top:615.2px;width:16.699999999999932px;height:16.799999999999955px;border:1px solid #3a8ee0;background:#d8e8f8"></div>
<svg style="left:612px;top:619px" width="14" height="9" viewBox="0 0 14 9"><rect x=".5" y="1" width="13" height="7" fill="#f0c020" stroke="#555" stroke-width=".6"/><path d="M1 3h12" stroke="#333" stroke-width=".8"/></svg>
<div class="a" style="left:630.9px;top:616px;width:1.0px;height:15px;background:#c8c8c8"></div>
<svg style="left:634px;top:617px" width="13" height="13" viewBox="0 0 13 13"><path d="M1.5 1.5l10 10M11.5 1.5l-10 10" stroke="#e22" stroke-width="2.6"/></svg>
<div class="t" style="top:643.4px;font-size:9.5px;line-height:13px;color:#111;right:207.0px;text-align:right;transform-origin:right;transform:scaleX(0.88);">Max</div>
<div class="tb" style="left:487.6px;top:646.5px;width:36.5px;height:9.399999999999977px"></div>
<div class="t" style="top:643.9px;font-size:9.5px;line-height:13px;color:#111;right:168.4px;text-align:right;transform-origin:right;transform:scaleX(0.88);">0.57</div>
<div class="t" style="top:643.4px;font-size:9.5px;line-height:13px;color:#111;left:528.3px;transform-origin:left;transform:scaleX(0.88);">mK</div>
<div class="t" style="top:658.4px;font-size:9.5px;line-height:13px;color:#111;right:207.0px;text-align:right;transform-origin:right;transform:scaleX(0.88);">Min</div>
<div class="tb" style="left:487.6px;top:661.1px;width:36.5px;height:9.799999999999955px"></div>
<div class="t" style="top:658.7px;font-size:9.5px;line-height:13px;color:#111;right:168.4px;text-align:right;transform-origin:right;transform:scaleX(0.88);">0.57</div>
<div class="t" style="top:658.4px;font-size:9.5px;line-height:13px;color:#111;left:528.3px;transform-origin:left;transform:scaleX(0.88);">mK</div>
<div class="t" style="top:674.0px;font-size:9.5px;line-height:13px;color:#111;right:207.0px;text-align:right;transform-origin:right;transform:scaleX(0.88);">Mean</div>
<div class="tb" style="left:487.6px;top:676.1px;width:36.5px;height:10.399999999999977px"></div>
<div class="t" style="top:674.0px;font-size:9.5px;line-height:13px;color:#111;right:168.4px;text-align:right;transform-origin:right;transform:scaleX(0.88);">0.57</div>
<div class="t" style="top:674.0px;font-size:9.5px;line-height:13px;color:#111;left:528.3px;transform-origin:left;transform:scaleX(0.88);">mK</div>
<svg style="left:553.0px;top:645.2px" width="11" height="11" viewBox="0 0 11 11"><circle cx="5.5" cy="5.5" r="4.6" fill="#fff" stroke="#333" stroke-width="1"/><circle cx="5.5" cy="5.5" r="2.3" fill="#111"/></svg>
<div class="t" style="top:643.4px;font-size:9.5px;line-height:13px;color:#111;left:567.6px;transform-origin:left;transform:scaleX(0.88);">Main Image Transfer</div>
<svg style="left:553.0px;top:658.4px" width="11" height="11" viewBox="0 0 11 11"><circle cx="5.5" cy="5.5" r="4.6" fill="#fff" stroke="#333" stroke-width="1"/></svg>
<div class="t" style="top:656.6px;font-size:9.5px;line-height:13px;color:#111;left:567.6px;transform-origin:left;transform:scaleX(0.88);">Phase Image Transfer</div>
<div class="btn" style="left:553.7px;top:675.4px;width:35.39999999999998px;height:15.300000000000068px"></div>
<div class="t" style="top:675.7px;font-size:9.5px;line-height:13px;color:#111;left:553.7px;width:35.39999999999998px;text-align:center;transform-origin:center;transform:scaleX(0.88);">Send</div>
<div class="btn" style="left:596.1px;top:675.4px;width:35.5px;height:15.300000000000068px"></div>
<div class="t" style="top:675.7px;font-size:9.5px;line-height:13px;color:#111;left:596.1px;width:35.5px;text-align:center;transform-origin:center;transform:scaleX(0.88);">Get</div>
<div class="a" style="left:0px;top:707px;width:664px;height:1px;background:#e2e2e2"></div>
<div class="q" style="left:13.0px;top:709.5px;font-size:12px">?</div>
<div class="t" style="top:708.7px;font-size:9.5px;line-height:13px;color:#111;left:27.4px;transform-origin:left;transform:scaleX(0.88);">1 Hz</div>
<div class="t" style="top:708.7px;font-size:9.5px;line-height:13px;color:#111;left:57.8px;transform-origin:left;transform:scaleX(0.88);">Res:</div>
<div class="t" style="top:708.7px;font-size:9.5px;line-height:13px;color:#111;left:79.1px;transform-origin:left;transform:scaleX(0.88);">10 µK</div>
<div class="t" style="top:708.7px;font-size:9.5px;line-height:13px;color:#111;left:113.0px;transform-origin:left;transform:scaleX(0.88);">Update:</div>
<div class="t" style="top:708.7px;font-size:9.5px;line-height:13px;color:#111;left:150.0px;transform-origin:left;transform:scaleX(0.88);">10 sec</div>
<div class="t" style="top:708.7px;font-size:9.5px;line-height:13px;color:#111;left:216.0px;transform-origin:left;transform:scaleX(0.88);">Date:</div>
<div class="t" style="top:708.7px;font-size:9.5px;line-height:13px;color:#111;left:249.0px;transform-origin:left;transform:scaleX(0.88);">Test File</div>
<div class="co" style="left:19.1px;top:8.7px;width:66.1px;height:56.89999999999999px"></div>
<div class="t" style="left:31.3px;top:15.5px;font-size:14.5px;line-height:19px;color:#000;-webkit-text-stroke:.15px #000;transform-origin:left;transform:scaleX(0.95)">Relay</div>
<div class="t" style="left:31.3px;top:35.1px;font-size:14.5px;line-height:19px;color:#000;-webkit-text-stroke:.15px #000;transform-origin:left;transform:scaleX(1.0)">setup</div>
<div class="co" style="left:112.5px;top:2px;width:88.19999999999999px;height:57.2px"></div>
<div class="t" style="left:124px;top:9.0px;font-size:14.5px;line-height:19px;color:#000;-webkit-text-stroke:.15px #000;transform-origin:left;transform:scaleX(1.0)">Advanced</div>
<div class="t" style="left:124px;top:28.5px;font-size:14.5px;line-height:19px;color:#000;-webkit-text-stroke:.15px #000;transform-origin:left;transform:scaleX(1.0)">settings</div>
<div class="co" style="left:219.1px;top:16.4px;width:65.79999999999998px;height:56.9px"></div>
<div class="t" style="left:230.3px;top:23.3px;font-size:14.5px;line-height:19px;color:#000;-webkit-text-stroke:.15px #000;transform-origin:left;transform:scaleX(1.0)">Image</div>
<div class="t" style="left:230.3px;top:42.9px;font-size:14.5px;line-height:19px;color:#000;-webkit-text-stroke:.15px #000;transform-origin:left;transform:scaleX(0.94)">size</div>
<div class="co" style="left:330px;top:4.4px;width:60.30000000000001px;height:55.6px"></div>
<div class="t" style="left:341.2px;top:11.5px;font-size:14.5px;line-height:19px;color:#000;-webkit-text-stroke:.15px #000;transform-origin:left;transform:scaleX(1.0)">Zoom</div>
<div class="t" style="left:341.2px;top:30.5px;font-size:14.5px;line-height:19px;color:#000;-webkit-text-stroke:.15px #000;transform-origin:left;transform:scaleX(1.08)">tools</div>
<div class="co" style="left:418.5px;top:4.4px;width:93.89999999999998px;height:56.9px"></div>
<div class="t" style="left:430px;top:11.5px;font-size:14.5px;line-height:19px;color:#000;-webkit-text-stroke:.15px #000;transform-origin:left;transform:scaleX(1.0)">Auto scale</div>
<div class="t" style="left:430px;top:30.5px;font-size:14.5px;line-height:19px;color:#000;-webkit-text-stroke:.15px #000;transform-origin:left;transform:scaleX(1.0)">each</div>
<div class="co" style="left:560.7px;top:7.6px;width:119.09999999999991px;height:56.99999999999999px"></div>
<div class="t" style="left:572px;top:14.5px;font-size:14.5px;line-height:19px;color:#000;-webkit-text-stroke:.15px #000;transform-origin:left;transform:scaleX(1.0)">Lock-in</div>
<div class="t" style="left:572px;top:33.8px;font-size:14.5px;line-height:19px;color:#000;-webkit-text-stroke:.15px #000;transform-origin:left;transform:scaleX(1.05)">thermography</div>
<div class="co" style="left:-2px;top:759.7px;width:69.3px;height:54.69999999999993px"></div>
<div class="t" style="left:8.6px;top:766.8px;font-size:14.5px;line-height:19px;color:#000;-webkit-text-stroke:.15px #000;transform-origin:left;transform:scaleX(1.04)">Testing</div>
<div class="t" style="left:8.6px;top:786.9px;font-size:14.5px;line-height:19px;color:#000;-webkit-text-stroke:.15px #000;transform-origin:left;transform:scaleX(1.1)">On/Of</div>
<div class="co" style="left:62.6px;top:817.3px;width:62.9px;height:59.200000000000045px"></div>
<div class="t" style="left:74.4px;top:824.7px;font-size:14.5px;line-height:19px;color:#000;-webkit-text-stroke:.15px #000;transform-origin:left;transform:scaleX(0.95)">Clear</div>
<div class="t" style="left:74.4px;top:843.2px;font-size:14.5px;line-height:19px;color:#000;-webkit-text-stroke:.15px #000;transform-origin:left;transform:scaleX(1.0)">test</div>
<div class="co" style="left:133.6px;top:777.4px;width:71.70000000000002px;height:78.0px"></div>
<div class="t" style="left:145.3px;top:783.8px;font-size:14.5px;line-height:19px;color:#000;-webkit-text-stroke:.15px #000;transform-origin:left;transform:scaleX(1.0)">Update</div>
<div class="t" style="left:145.3px;top:803.9px;font-size:14.5px;line-height:19px;color:#000;-webkit-text-stroke:.15px #000;transform-origin:left;transform:scaleX(1.0)">single</div>
<div class="t" style="left:145.3px;top:824.2px;font-size:14.5px;line-height:19px;color:#000;-webkit-text-stroke:.15px #000;transform-origin:left;transform:scaleX(1.0)">phase</div>
<div class="co" style="left:221.2px;top:740.3px;width:65.80000000000001px;height:82.70000000000005px"></div>
<div class="t" style="left:232.7px;top:747.2px;font-size:14.5px;line-height:19px;color:#000;-webkit-text-stroke:.15px #000;transform-origin:left;transform:scaleX(0.96)">Phase</div>
<div class="t" style="left:232.7px;top:767.3px;font-size:14.5px;line-height:19px;color:#000;-webkit-text-stroke:.15px #000;transform-origin:left;transform:scaleX(1.0)">angle</div>
<div class="t" style="left:232.7px;top:786.9px;font-size:14.5px;line-height:19px;color:#000;-webkit-text-stroke:.15px #000;transform-origin:left;transform:scaleX(1.0)">slider</div>
<div class="co" style="left:267.8px;top:840px;width:75.69999999999999px;height:58.200000000000045px"></div>
<div class="t" style="left:279.6px;top:847.7px;font-size:14.5px;line-height:19px;color:#000;-webkit-text-stroke:.15px #000;transform-origin:left;transform:scaleX(1.0)">Overlay</div>
<div class="t" style="left:279.6px;top:866.7px;font-size:14.5px;line-height:19px;color:#000;-webkit-text-stroke:.15px #000;transform-origin:left;transform:scaleX(1.0)">show</div>
<div class="co" style="left:332.3px;top:746.9px;width:76.89999999999998px;height:76.10000000000002px"></div>
<div class="t" style="left:343.5px;top:754.5px;font-size:14.5px;line-height:19px;color:#000;-webkit-text-stroke:.15px #000;transform-origin:left;transform:scaleX(1.0)">Overlay</div>
<div class="t" style="left:343.5px;top:773.9px;font-size:14.5px;line-height:19px;color:#000;-webkit-text-stroke:.15px #000;transform-origin:left;transform:scaleX(1.06)">palette</div>
<div class="t" style="left:343.5px;top:792.9px;font-size:14.5px;line-height:19px;color:#000;-webkit-text-stroke:.15px #000;transform-origin:left;transform:scaleX(0.96)">scale</div>
<div class="co" style="left:403.1px;top:839.5px;width:74.59999999999997px;height:57.89999999999998px"></div>
<div class="t" style="left:414.9px;top:846.4px;font-size:14.5px;line-height:19px;color:#000;-webkit-text-stroke:.15px #000;transform-origin:left;transform:scaleX(1.0)">Overlay</div>
<div class="t" style="left:414.9px;top:865.5px;font-size:14.5px;line-height:19px;color:#000;-webkit-text-stroke:.15px #000;transform-origin:left;transform:scaleX(1.0)">range</div>
<div class="co" style="left:460.8px;top:760.4px;width:65.99999999999994px;height:59.30000000000007px"></div>
<div class="t" style="left:472.5px;top:767.3px;font-size:14.5px;line-height:19px;color:#000;-webkit-text-stroke:.15px #000;transform-origin:left;transform:scaleX(1.0)">Point</div>
<div class="t" style="left:472.5px;top:786.9px;font-size:14.5px;line-height:19px;color:#000;-webkit-text-stroke:.15px #000;transform-origin:left;transform:scaleX(1.05)">region</div>
<div class="co" style="left:530.9px;top:786.3px;width:82.39999999999998px;height:58.90000000000009px"></div>
<div class="t" style="left:542.6px;top:792.4px;font-size:14.5px;line-height:19px;color:#000;-webkit-text-stroke:.15px #000;transform-origin:left;transform:scaleX(1.0)">Measure</div>
<div class="t" style="left:542.6px;top:812.5px;font-size:14.5px;line-height:19px;color:#000;-webkit-text-stroke:.15px #000;transform-origin:left;transform:scaleX(1.0)">distance</div>
<div class="co" style="left:618.5px;top:764.4px;width:69.20000000000005px;height:61.0px"></div>
<div class="t" style="left:630px;top:770.7px;font-size:14.5px;line-height:19px;color:#000;-webkit-text-stroke:.15px #000;transform-origin:left;transform:scaleX(1.0)">Delete</div>
<div class="t" style="left:630px;top:790.3px;font-size:14.5px;line-height:19px;color:#000;-webkit-text-stroke:.15px #000;transform-origin:left;transform:scaleX(1.0)">region</div>
<svg style="left:0;top:0" width="690" height="900" viewBox="0 0 690 900"><line x1="53" y1="65.6" x2="159.2" y2="157.1" stroke="#ff0000" stroke-width="3.4"/><polygon points="166,163 156.2,160.6 162.2,153.6" fill="#ff0000"/><line x1="152" y1="59" x2="184.2" y2="155.5" stroke="#ff0000" stroke-width="3.4"/><polygon points="187,164 179.8,156.9 188.5,154.0" fill="#ff0000"/><line x1="249" y1="73" x2="211.6" y2="159.7" stroke="#ff0000" stroke-width="3.4"/><polygon points="208,168 207.3,157.9 215.8,161.6" fill="#ff0000"/><line x1="357" y1="60" x2="294.8" y2="158.4" stroke="#ff0000" stroke-width="3.4"/><polygon points="290,166 290.9,155.9 298.7,160.9" fill="#ff0000"/><line x1="462.6" y1="61.3" x2="557.3" y2="227.2" stroke="#ff0000" stroke-width="3.4"/><polygon points="561.8,235 553.3,229.5 561.3,224.9" fill="#ff0000"/><line x1="626" y1="64.6" x2="669.4" y2="92.2" stroke="#ff0000" stroke-width="3.4"/><polygon points="677,97 666.9,96.1 671.9,88.3" fill="#ff0000"/><line x1="33.9" y1="759.7" x2="39.2" y2="605.5" stroke="#ff0000" stroke-width="3.4"/><polygon points="39.5,596.5 43.8,605.7 34.6,605.3" fill="#ff0000"/><line x1="95.2" y1="817.3" x2="180.7" y2="618.3" stroke="#ff0000" stroke-width="3.4"/><polygon points="184.3,610 185.0,620.1 176.5,616.5" fill="#ff0000"/><line x1="165.7" y1="777.4" x2="234.8" y2="577.8" stroke="#ff0000" stroke-width="3.4"/><polygon points="237.7,569.3 239.1,579.3 230.4,576.3" fill="#ff0000"/><line x1="262.2" y1="740.3" x2="313.4" y2="676.3" stroke="#ff0000" stroke-width="3.4"/><polygon points="319,669.3 317.0,679.2 309.8,673.5" fill="#ff0000"/><line x1="307.7" y1="840" x2="354.4" y2="579.2" stroke="#ff0000" stroke-width="3.4"/><polygon points="356,570.3 358.9,580.0 349.9,578.3" fill="#ff0000"/><line x1="371.7" y1="746.9" x2="402.4" y2="603.8" stroke="#ff0000" stroke-width="3.4"/><polygon points="404.3,595 406.9,604.8 397.9,602.8" fill="#ff0000"/><line x1="439.1" y1="839.5" x2="418.6" y2="624.0" stroke="#ff0000" stroke-width="3.4"/><polygon points="417.7,615 423.1,623.5 414.0,624.4" fill="#ff0000"/><line x1="496" y1="760.4" x2="492.3" y2="637.0" stroke="#ff0000" stroke-width="3.4"/><polygon points="492,628 496.9,636.9 487.7,637.1" fill="#ff0000"/><line x1="576.5" y1="786.3" x2="613.2" y2="639.0" stroke="#ff0000" stroke-width="3.4"/><polygon points="615.4,630.3 617.7,640.1 608.8,637.9" fill="#ff0000"/><line x1="650.9" y1="764.4" x2="640.1" y2="637.7" stroke="#ff0000" stroke-width="3.4"/><polygon points="639.3,628.7 644.6,637.3 635.5,638.1" fill="#ff0000"/></svg>
</body></html>
